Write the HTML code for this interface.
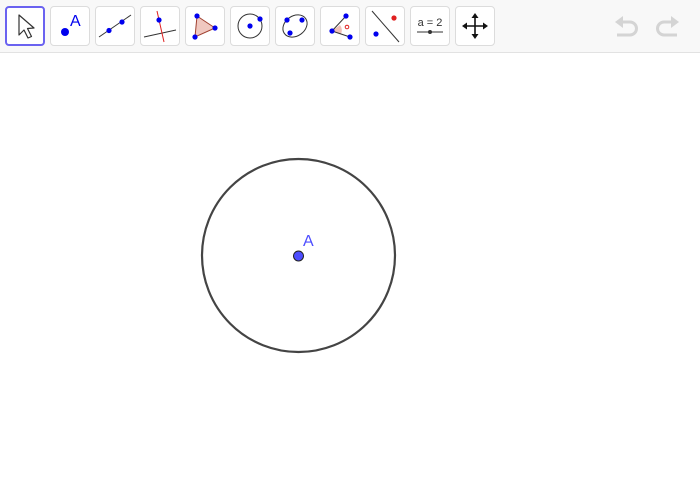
<!DOCTYPE html>
<html><head><meta charset="utf-8"><style>
html,body{margin:0;padding:0;width:700px;height:500px;overflow:hidden;background:#fff;font-family:"Liberation Sans",sans-serif}
.tb{position:absolute;left:0;top:0;width:700px;height:52px;background:#f8f8f8;border-bottom:1px solid #e2e2e2}
.b{position:absolute;top:6px;width:38px;height:38px;border:1px solid #dcdcdc;border-radius:4px;background:#fff}
.b.sel{border:2px solid #6a62f0;width:36px;height:36px}
.b svg{position:absolute;left:0;top:0}
</style></head><body>
<div class="tb">
<div class="b sel" style="left:5px"><svg width="36" height="36"><path d="M12 7 L12 27 L17 22 L21 30 L24.5 28.5 L20.5 20.5 L27 20 Z" fill="#fff" stroke="#333" stroke-width="1.2" stroke-linejoin="round"/></svg></div>
<div class="b" style="left:50px"><svg width="38" height="38"><circle cx="14" cy="25" r="4" fill="#0000ee"/><text x="19" y="19" font-size="16" fill="#0000ee" font-family="Liberation Sans">A</text></svg></div>
<div class="b" style="left:95px"><svg width="38" height="38"><line x1="3" y1="30" x2="35" y2="8" stroke="#333" stroke-width="1"/><circle cx="13" cy="23.5" r="2.6" fill="#0000ee"/><circle cx="26" cy="15" r="2.6" fill="#0000ee"/></svg></div>
<div class="b" style="left:140px"><svg width="38" height="38"><line x1="3" y1="30" x2="35" y2="23" stroke="#333"/><line x1="16" y1="4" x2="23" y2="35" stroke="#e02020"/><circle cx="18" cy="13" r="2.6" fill="#0000ee"/></svg></div>
<div class="b" style="left:185px"><svg width="38" height="38"><polygon points="11,9 29,21 9,30" fill="#f0c8c0" stroke="#a04030" stroke-width="1"/><circle cx="11" cy="9" r="2.6" fill="#0000ee"/><circle cx="29" cy="21" r="2.6" fill="#0000ee"/><circle cx="9" cy="30" r="2.6" fill="#0000ee"/></svg></div>
<div class="b" style="left:230px"><svg width="38" height="38"><circle cx="19" cy="19" r="12" fill="none" stroke="#333"/><circle cx="19" cy="19" r="2.6" fill="#0000ee"/><circle cx="29" cy="12" r="2.6" fill="#0000ee"/></svg></div>
<div class="b" style="left:275px"><svg width="38" height="38"><ellipse cx="19" cy="19" rx="13" ry="10" transform="rotate(-35 19 19)" fill="none" stroke="#333"/><circle cx="11" cy="13" r="2.6" fill="#0000ee"/><circle cx="26" cy="13" r="2.6" fill="#0000ee"/><circle cx="14" cy="26" r="2.6" fill="#0000ee"/></svg></div>
<div class="b" style="left:320px"><svg width="38" height="38"><path d="M11 24 L19 18 A9 9 0 0 1 20 27 Z" fill="#f0c0b8"/><line x1="11" y1="24" x2="25" y2="9" stroke="#333"/><line x1="11" y1="24" x2="29" y2="30" stroke="#333"/><circle cx="25" cy="9" r="2.6" fill="#0000ee"/><circle cx="11" cy="24" r="2.6" fill="#0000ee"/><circle cx="29" cy="30" r="2.6" fill="#0000ee"/><circle cx="26" cy="20" r="1.8" fill="none" stroke="#e02020"/></svg></div>
<div class="b" style="left:365px"><svg width="38" height="38"><line x1="6" y1="4" x2="33" y2="35" stroke="#333"/><circle cx="28" cy="11" r="2.6" fill="#e02020"/><circle cx="10" cy="27" r="2.6" fill="#0000ee"/></svg></div>
<div class="b" style="left:410px"><svg width="38" height="38"><text x="19" y="19" font-size="11" text-anchor="middle" fill="#333" font-family="Liberation Sans">a = 2</text><line x1="6" y1="25" x2="32" y2="25" stroke="#333"/><circle cx="19" cy="25" r="2" fill="#333"/></svg></div>
<div class="b" style="left:455px"><svg width="38" height="38"><g stroke="#111" stroke-width="1.6"><line x1="19" y1="9" x2="19" y2="29"/><line x1="9" y1="19" x2="29" y2="19"/></g><g fill="#111"><polygon points="19,6 15.5,11 22.5,11"/><polygon points="19,32 15.5,27 22.5,27"/><polygon points="6,19 11,15.5 11,22.5"/><polygon points="32,19 27,15.5 27,22.5"/></g></svg></div>
<svg style="position:absolute;left:612px;top:12px" width="70" height="30"><g fill="none" stroke="#d4d4d4" stroke-width="3"><path d="M9 10 H18 A6.5 6.5 0 0 1 18 23 H5"/><path d="M61 10 H52 A6.5 6.5 0 0 0 52 23 H65"/></g><g fill="#d4d4d4"><polygon points="3,10 11,4 11,16"/><polygon points="67,10 59,4 59,16"/></g></svg>
</div>
<svg style="position:absolute;left:0;top:0" width="700" height="500">
<circle cx="298.5" cy="255.5" r="96.5" fill="none" stroke="#444" stroke-width="2.2"/>
<circle cx="298.5" cy="256" r="5" fill="#4d4dff" stroke="#222" stroke-width="1"/>
<text x="303" y="246" font-size="16" fill="#4d4dff" font-family="Liberation Sans">A</text>
</svg>
</body></html>
